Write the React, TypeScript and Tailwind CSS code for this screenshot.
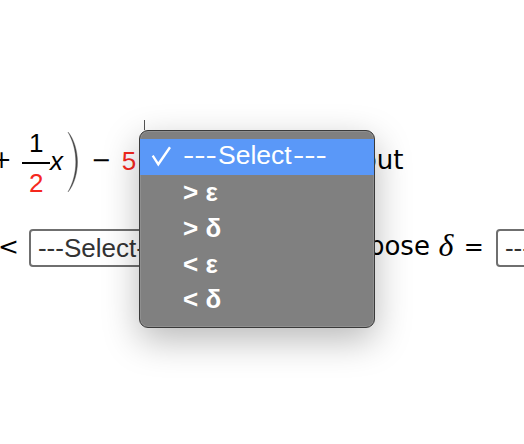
const selectBox = "h-[38px] w-[150px] shrink-0 overflow-hidden whitespace-nowrap rounded-[4px] border-2 border-[#6f6f6f] bg-white pl-[7px] text-[26px] leading-[34px] text-[#333333] [font-family:'Liberation_Sans',sans-serif]";

const options = ["> ε", "> δ", "< ε", "< δ"];

const Fraction = () => (
  <span className="ml-[10.5px] flex w-[28px] flex-col items-center text-[26px] leading-[28px] [font-family:'Liberation_Sans',sans-serif]">
    <span className="h-[35px] w-[28px] border-b-2 border-black text-center text-black">1</span>
    <span className="mt-[5px] text-[#f5281e]">2</span>
  </span>
);

const Paren = () => (
  <svg width="14" height="62" viewBox="0 0 14 62" className="ml-[3px] mt-[2px]">
    <path d="M2 1C8 8 11.5 20 11.5 31C11.5 42 8 54 2 61C7 52 9.8 42 9.8 31C9.8 20 7 10 2 1Z" fill="#444444" stroke="#555555" strokeWidth="0.4" />
  </svg>
);

const Menu = () => (
  <div className="absolute left-[139px] top-[130px] h-[198px] w-[236px] overflow-hidden rounded-[9px] border border-[#3a3a3a] bg-[#808080] pt-[8px] shadow-[0_12px_36px_rgba(0,0,0,0.28),inset_0_0_0_1px_rgba(255,255,255,0.12)] [font-family:'Liberation_Sans',sans-serif]">
    <div className="flex h-[36px] items-center bg-[#5a98f8] pb-[2px] text-[26.5px] text-white">
      <svg width="20" height="20" viewBox="0 0 20 20" className="ml-[12px] mt-[2px] overflow-visible">
        <path d="M0.7 8.7L6.3 17.3L18 0.3" fill="none" stroke="white" strokeWidth="2.4" />
      </svg>
      <span className="ml-[11px] flex">
        <span className="inline-block w-[35px] origin-left scale-x-[1.28]">---</span>
        <span>Select</span>
        <span className="ml-[1px] inline-block w-[35px] origin-left scale-x-[1.28]">---</span>
      </span>
    </div>
    {options.map((option) => (
      <div key={option} className="flex h-[35.7px] items-center whitespace-pre pl-[43px] text-[26px] font-bold text-white">
        {option}
      </div>
    ))}
  </div>
);

export default function App() {
  return (
    <div className="relative h-[444px] w-[524px] overflow-hidden bg-white text-black [font-family:'DejaVu_Sans',sans-serif]">
      <div className="flex flex-col pt-[129px]">
        <div className="flex h-[66px] items-start text-[24px] leading-[36px]">
          <span className="ml-[-8.5px] mt-[13px]">+</span>
          <Fraction />
          <span className="mt-[14px] text-[26px] italic [font-family:'Liberation_Sans',sans-serif]">x</span>
          <Paren />
          <span className="ml-[11px] mt-[13px]">−</span>
          <span className="ml-[10.5px] mt-[14px] text-[26px] text-[#f5281e] [font-family:'Liberation_Sans',sans-serif]">5</span>
          <span className="ml-[224px] mt-[13px] text-[26px]">but</span>
        </div>
        <div className="mt-[34px] flex h-[38px] items-start text-[24px] leading-[36px]">
          <span className="ml-[-2px] text-[25px]">&lt;</span>
          <div className={`ml-[10px] ${selectBox}`}>---Select---</div>
          <span className="ml-[189px] mt-[-1px] text-[26px]">pose</span>
          <span className="ml-[8.5px] mt-[-2px] text-[32px] italic [font-family:'Liberation_Serif',serif]">δ</span>
          <span className="ml-[10.5px]">=</span>
          <div className={`ml-[12px] ${selectBox}`}>---Select---</div>
        </div>
      </div>
      <div className="absolute left-[144px] top-[120px] h-[10px] w-px bg-[#555555]" />
      <Menu />
    </div>
  );
}
